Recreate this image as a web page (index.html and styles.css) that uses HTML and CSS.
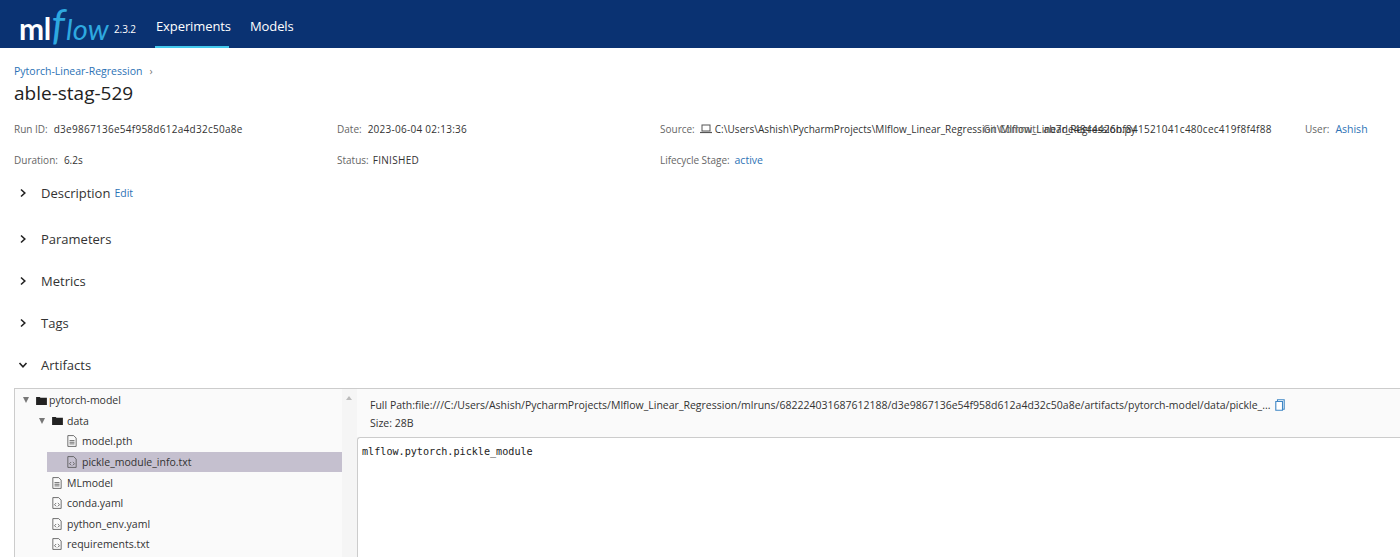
FILE: index.html
```html
<!DOCTYPE html>
<html lang="en">
<head>
<meta charset="utf-8">
<title>able-stag-529 - MLflow Run</title>
<link rel="stylesheet" href="styles.css">
</head>
<body>
<header class="topbar">
  <a class="logo">
    <span class="logo-ml">ml</span><span class="logo-f">f</span><span class="logo-flow">low</span>
  </a>
  <span class="version">2.3.2</span>
  <nav class="nav">
    <a class="nav-item nav-active">Experiments</a>
    <a class="nav-item">Models</a>
  </nav>
</header>
<main class="page">
  <div class="crumbs"><a class="link">Pytorch-Linear-Regression</a><span class="crumb-sep">›</span></div>
  <h1 class="title">able-stag-529</h1>
  <div class="meta-row">
    <div class="meta meta-a"><span class="label">Run ID:</span><span class="val hash">d3e9867136e54f958d612a4d32c50a8e</span></div>
    <div class="meta meta-b"><span class="label">Date:</span><span class="val hash">2023-06-04 02:13:36</span></div>
    <div class="meta meta-c">
      <span class="label">Source:</span>
      <svg class="laptop" viewBox="0 0 12 10" width="12" height="10"><rect x="2" y="1" width="8" height="6" fill="none" stroke="#555" stroke-width="1"/><path d="M0 8.500h12" stroke="#555" stroke-width="1.200"/></svg>
      <span class="val source">C:\Users\Ashish\PycharmProjects\Mlflow_Linear_Regression\Mlflow_Linear_Regression.py</span>
      <span class="git"><span class="label git-label">Git Commit:</span><span class="val hash">ab7de4844426bf841521041c480cec419f8f4f88</span></span>
    </div>
    <div class="meta meta-d"><span class="label">User:</span><a class="val link link-lg">Ashish</a></div>
  </div>
  <div class="meta-row meta-row2">
    <div class="meta meta-a"><span class="label">Duration:</span><span class="val">6.2s</span></div>
    <div class="meta meta-b"><span class="label">Status:</span><span class="val status">FINISHED</span></div>
    <div class="meta meta-c"><span class="label label-tight">Lifecycle Stage:</span><a class="val link link-lg">active</a></div>
  </div>
  <section class="section sec-desc"><svg class="chev" viewBox="0 0 10 10"><path d="M3 1.500 6.800 5 3 8.500" /></svg><span class="sec-title">Description</span><a class="link edit">Edit</a></section>
  <section class="section sec-param"><svg class="chev" viewBox="0 0 10 10"><path d="M3 1.500 6.800 5 3 8.500" /></svg><span class="sec-title">Parameters</span></section>
  <section class="section sec-other"><svg class="chev" viewBox="0 0 10 10"><path d="M3 1.500 6.800 5 3 8.500" /></svg><span class="sec-title">Metrics</span></section>
  <section class="section sec-other"><svg class="chev" viewBox="0 0 10 10"><path d="M3 1.500 6.800 5 3 8.500" /></svg><span class="sec-title">Tags</span></section>
  <section class="section sec-other"><svg class="chev" viewBox="0 0 10 10"><path d="M1.500 3 5 6.800 8.500 3" /></svg><span class="sec-title">Artifacts</span></section>
  <div class="artifacts">
    <div class="tree">
      <div class="node lvl0"><i class="arrow"></i><svg class="folder" viewBox="0 0 12 10"><path d="M0 1h4l1 1h7v8H0z"/></svg><span>pytorch-model</span></div>
      <div class="node lvl1"><i class="arrow"></i><svg class="folder" viewBox="0 0 12 10"><path d="M0 1h4l1 1h7v8H0z"/></svg><span>data</span></div>
      <div class="node lvl2"><svg class="file" viewBox="0 0 12 14"><path class="o" d="M1 .5h7l3 3v10H1z"/><path class="o" d="M3 6.500h6M3 8.500h6M3 10.500h6"/></svg><span>model.pth</span></div>
      <div class="node lvl2 selected"><svg class="file" viewBox="0 0 12 14"><path class="o" d="M1 .5h7l3 3v10H1z"/><path class="o" d="M5 7 3 9l2 2M7 7l2 2-2 2"/></svg><span>pickle_module_info.txt</span></div>
      <div class="node lvl1f"><svg class="file" viewBox="0 0 12 14"><path class="o" d="M1 .5h7l3 3v10H1z"/><path class="o" d="M3 6.500h6M3 8.500h6M3 10.500h6"/></svg><span>MLmodel</span></div>
      <div class="node lvl1f"><svg class="file" viewBox="0 0 12 14"><path class="o" d="M1 .5h7l3 3v10H1z"/><path class="o" d="M5 7 3 9l2 2M7 7l2 2-2 2"/></svg><span>conda.yaml</span></div>
      <div class="node lvl1f"><svg class="file" viewBox="0 0 12 14"><path class="o" d="M1 .5h7l3 3v10H1z"/><path class="o" d="M5 7 3 9l2 2M7 7l2 2-2 2"/></svg><span>python_env.yaml</span></div>
      <div class="node lvl1f"><svg class="file" viewBox="0 0 12 14"><path class="o" d="M1 .5h7l3 3v10H1z"/><path class="o" d="M5 7 3 9l2 2M7 7l2 2-2 2"/></svg><span>requirements.txt</span></div>
    </div>
    <div class="scrollbar"><i class="scroll-up"></i></div>
    <div class="viewer">
      <div class="info">
        <div class="path"><span>Full Path:</span><span class="path-val">file:///C:/Users/Ashish/PycharmProjects/Mlflow_Linear_Regression/mlruns/682224031687612188/d3e9867136e54f958d612a4d32c50a8e/artifacts/pytorch-model/data/pickle_...</span><svg class="copy" viewBox="0 0 10 12"><path d="M2.500 2.500V.8h6.700v9.400H7.500M.8 2.500h6.700v8.700H.8z"/></svg></div>
        <div class="size">Size: 28B</div>
      </div>
      <pre class="code">mlflow.pytorch.pickle_module</pre>
    </div>
  </div>
</main>
</body>
</html>
```
FILE: styles.css
```css
html, body { margin: 0; padding: 0; }
body {
  width: 1400px; height: 557px; overflow: hidden; background: #fff;
  font-family: "Open Sans", "Noto Sans", sans-serif; color: #333; font-size: 11px;
}
.topbar { height: 48px; background: #0a3272; display: flex; align-items: center; color: #fff; }
.logo { margin-left: 19px; display: flex; align-items: baseline; width: 92px; height: 48px; line-height: 48px; font-family: "Lato", sans-serif; }
.logo-ml { font-size: 30px; font-weight: 700; color: #fff; letter-spacing: -0.5px; }
.logo-f { font-size: 42px; font-style: italic; color: #2ea9e0; margin-left: 1px; }
.logo-flow { font-size: 29px; font-style: italic; color: #2ea9e0; margin-left: 1px; letter-spacing: 0.2px; }
.version { font-size: 10px; margin-top: 10px; margin-left: 3px; width: 41px; letter-spacing: -0.1px; }
.nav { display: flex; height: 48px; gap: 20px; }
.nav-item { font-size: 13px; line-height: 52px; height: 46px; padding: 0 1px; color: #fff; letter-spacing: -0.1px; }
.nav-active { border-bottom: 2px solid #43c9ed; width: 72px; }
.page { padding: 0 14px; }
.crumbs { margin-top: 16px; height: 14px; line-height: 14px; font-size: 10.500px; display: flex; }
.crumb-sep { margin-left: 7px; color: #777; }
.title { margin: 2px 0 0; font-size: 19px; font-weight: 400; line-height: 26px; color: #222; height: 26px; }
.meta-row { display: flex; height: 14px; line-height: 14px; margin-top: 16px; white-space: nowrap; font-size: 10px; }
.meta-row2 { margin-top: 17px; }
.meta { display: flex; align-items: center; }
.label { color: #666; margin-right: 6px; }
.label-tight { margin-right: 5px; letter-spacing: -0.05px; }
.val { color: #333; }
.link { color: #2c72b5; }
.link-lg { font-size: 10.500px; }
.hash { letter-spacing: 0.27px; }
.status { margin-left: -2px; letter-spacing: 0.3px; }
.source { letter-spacing: 0.05px; }
.meta-a { width: 323px; }
.meta-b { width: 323px; }
.meta-c { width: 645px; position: relative; }
.laptop { margin-right: 3px; margin-left: -1px; }
.git { position: absolute; left: 323px; top: 0; color: #444; }
.git-label { margin-right: 5px; }
.section { display: flex; align-items: center; height: 20px; font-size: 13px; color: #333; }
.chev { width: 10px; height: 10px; margin: 0 13px 0 4px; fill: none; stroke: #222; stroke-width: 1.600; }
.sec-desc { margin-top: 16px; }
.sec-param { margin-top: 26px; }
.sec-other { margin-top: 22px; }
.edit { font-size: 10.500px; margin-left: 4px; }
.artifacts { display: flex; margin-top: 13px; margin-right: -14px; height: 168px; overflow: hidden; border-top: 1px solid #ccc; border-left: 1px solid #ccc; }
.tree { width: 327px; background: #fafafa; font-size: 10.500px; flex: none; padding-top: 1px; }
.node { height: 20.600px; display: flex; align-items: center; white-space: nowrap; color: #333; }
.lvl0 { padding-left: 8px; }
.lvl1 { padding-left: 24px; }
.lvl2 { margin-left: 32px; padding-left: 20px; }
.lvl1f { padding-left: 37px; }
.lvl0 .folder { margin-right: 2px; }
.selected { background: #c5c0cf; }
.arrow { width: 0; height: 0; border-left: 3px solid transparent; border-right: 3px solid transparent; border-top: 6px solid #777; margin-right: 7px; }
.folder { width: 11px; height: 9px; fill: #222; margin-right: 4px; }
.file { width: 10px; height: 12px; margin-right: 5px; flex: none; }
.o { fill: none; stroke: #555; stroke-width: 1; }
.scrollbar { width: 15px; background: #f5f5f5; position: relative; flex: none; }
.scroll-up { position: absolute; left: 4px; top: 7px; border-left: 3px solid transparent; border-right: 3px solid transparent; border-bottom: 4px solid #bbb; }
.viewer { flex: 1; background: #fafafa; min-width: 0; display: flex; flex-direction: column; }
.info { padding: 0 0 0 13px; color: #333; font-size: 10.500px; flex: none; box-sizing: border-box; height: 48px; }
.path { display: flex; align-items: center; height: 21px; padding-top: 5px; box-sizing: content-box; white-space: nowrap; }
.copy { width: 10px; height: 12px; margin-left: 5px; fill: #fff; stroke: #3f87c5; stroke-width: 1.100; }
.size { height: 16px; line-height: 16px; }
.code { margin: 0; flex: 1; min-height: 0; background: #fff; border: 1px solid #ccc; border-right: 0; border-bottom: 0; border-top-left-radius: 3px; padding: 7px 4px; font-family: "DejaVu Sans Mono", monospace; font-size: 10.150px; line-height: 14px; color: #222; }
```
